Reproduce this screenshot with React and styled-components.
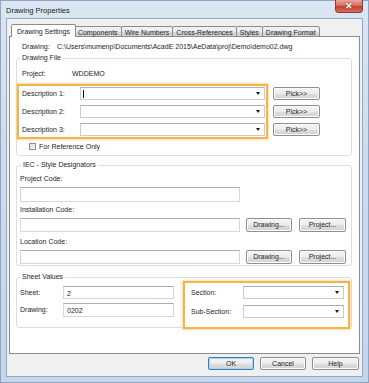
import styled, { createGlobalStyle } from "styled-components";

const GlobalStyle = createGlobalStyle`
  html, body {
    margin: 0;
    padding: 0;
  }
  body {
    font-family: "Liberation Sans", Arial, sans-serif;
    font-size: 7px;
    color: #1e1e1e;
  }
  * {
    box-sizing: border-box;
  }
`;

const Window = styled.div`
  width: 369px;
  height: 383px;
  display: flex;
  flex-direction: column;
  padding: 0 5px 5px 5px;
  border: 1px solid #8ea4c0;
  background: linear-gradient(180deg, #dbe6f3 0%, #cddced 40%, #c4d6ec 100%);
`;

const TitleBar = styled.div`
  height: 17px;
  display: flex;
  justify-content: space-between;
  align-items: flex-start;
`;

const TitleText = styled.div`
  padding-top: 5px;
  font-size: 7.5px;
  line-height: 9px;
  color: #1c1c1c;
`;

const CloseButton = styled.div`
  width: 28px;
  height: 13px;
  margin-top: -1px;
  border: 1px solid #8b3a33;
  border-top: none;
  border-radius: 0 0 4px 4px;
  background: linear-gradient(180deg, #e8a79d 0%, #d7705f 45%, #c2412e 55%, #d9705a 100%);
  color: #fff;
  font-size: 9px;
  font-weight: bold;
  line-height: 12px;
  text-align: center;
  text-shadow: 0 0 2px #6a1d14;
`;

const Client = styled.div`
  flex: 1;
  display: flex;
  flex-direction: column;
  padding: 5px 2px 0 2px;
  background: #f0f0f0;
  border: 1px solid #93a7c0;
`;

const TabsRow = styled.div`
  display: flex;
  align-items: flex-end;
  padding-left: 2px;
  margin-bottom: -1px;
  position: relative;
  z-index: 1;
`;

const Tab = styled.div`
  height: ${(p) => (p.$active ? "13px" : "11px")};
  padding: ${(p) => (p.$active ? "2px 5px 0" : "1px 3px 0")};
  margin: ${(p) => (p.$active ? "0 -1px 0 0" : "0 0 0 -1px")};
  line-height: 9px;
  border: 1px solid #898c95;
  border-bottom: ${(p) => (p.$active ? "none" : "1px solid #898c95")};
  border-radius: 2px 2px 0 0;
  background: ${(p) =>
    p.$active ? "#ffffff" : "linear-gradient(180deg, #f2f2f2 0%, #ebebeb 50%, #dddddd 51%, #cfcfcf 100%)"};
  white-space: nowrap;
  position: relative;
  z-index: ${(p) => (p.$active ? 2 : 1)};
`;

const Panel = styled.div`
  flex: 1;
  display: flex;
  flex-direction: column;
  background: #fff;
  border: 1px solid #898c95;
`;

const DrawingRow = styled.div`
  display: flex;
  height: 10px;
  line-height: 10px;
  margin-top: 5px;
  padding-left: 12px;
`;

const Label = styled.div`
  width: ${(p) => p.$w || "auto"};
  flex: none;
  line-height: 10px;
  white-space: nowrap;
`;

const Group = styled.fieldset`
  margin: ${(p) => p.$mt || "0"} 7px 0 6px;
  padding: 0 ${(p) => p.$px || "0"} ${(p) => p.$pb || "0"};
  border: 1px solid #dadfe3;
  border-radius: 3px;
  min-width: 0;
`;

const Legend = styled.legend`
  margin-left: ${(p) => p.$ml || "3px"};
  padding: 0 2px;
  line-height: 10px;
  font-size: 7px;
`;

const Row = styled.div`
  display: flex;
  align-items: center;
  height: ${(p) => p.$h || "10px"};
  margin-top: ${(p) => p.$mt || "0"};
  padding-left: ${(p) => p.$pl || "0"};
`;

const HighlightRow = styled.div`
  display: flex;
  align-items: flex-start;
  margin-top: ${(p) => p.$mt || "0"};
`;

const Highlight = styled.div`
  display: flex;
  flex-direction: column;
  gap: ${(p) => p.$gap};
  padding: ${(p) => p.$pad};
  margin: ${(p) => p.$margin || "0"};
  border: 2px solid #f3b54a;
  box-shadow: 0 0 2px 1px rgba(246, 196, 110, 0.6);
  position: relative;
`;

const Stack = styled.div`
  display: flex;
  flex-direction: column;
  gap: ${(p) => p.$gap};
  padding-top: ${(p) => p.$pt || "0"};
  margin-left: ${(p) => p.$ml || "0"};
`;

const Combo = styled.div`
  position: relative;
  width: ${(p) => p.$w};
  height: 13px;
  background: #fff;
  border: 1px solid #c9ccd3;
  border-top-color: #abadb3;

  &::after {
    content: "";
    position: absolute;
    right: 4px;
    top: 4px;
    border-left: 2.5px solid transparent;
    border-right: 2.5px solid transparent;
    border-top: 3px solid #1a1a1a;
  }
`;

const Caret = styled.span`
  position: absolute;
  left: 2px;
  top: 2px;
  width: 1px;
  height: 8px;
  background: #111;
`;

const TextBox = styled.div`
  width: ${(p) => p.$w};
  height: ${(p) => p.$h || "14px"};
  padding-left: 3px;
  line-height: ${(p) => p.$h || "14px"};
  background: #fff;
  border: 1px solid #d3d6dc;
  border-top-color: #abadb3;
  flex: none;
`;

const Button = styled.div`
  width: ${(p) => p.$w || "46px"};
  height: ${(p) => p.$h || "13px"};
  line-height: ${(p) => (p.$h ? `calc(${p.$h} - 2px)` : "11px")};
  margin-left: ${(p) => p.$ml || "0"};
  text-align: center;
  flex: none;
  border: 1px solid ${(p) => (p.$default ? "#3c7fb1" : "#8e8f8f")};
  border-radius: 2px;
  background: linear-gradient(180deg, #f4f4f4 0%, #ececec 50%, #dedede 51%, #d3d3d3 100%);
  box-shadow: ${(p) => (p.$default ? "inset 0 0 0 1px #a7d6f5" : "inset 0 0 0 1px #fbfbfb")};
`;

const CheckRow = styled.div`
  display: flex;
  align-items: center;
  gap: 3px;
  height: 10px;
  margin-top: 2px;
  padding-left: 12px;
`;

const CheckBox = styled.div`
  width: 7px;
  height: 7px;
  border: 1px solid #8f8f8f;
  background: linear-gradient(135deg, #dcdcdc 0%, #f6f6f6 100%);
`;

const FieldLabel = styled.div`
  line-height: 10px;
  margin-top: ${(p) => p.$mt || "0"};
`;

const FieldRow = styled.div`
  display: flex;
  margin-top: ${(p) => p.$mt || "0"};
`;

const SheetRow = styled.div`
  display: flex;
  align-items: flex-start;
`;

const BottomBar = styled.div`
  display: flex;
  justify-content: flex-end;
  height: 22px;
  padding: 3px 1px 0 0;
  gap: 6px;
`;

const descriptions = ["Description 1:", "Description 2:", "Description 3:"];
const tabs = ["Drawing Settings", "Components", "Wire Numbers", "Cross-References", "Styles", "Drawing Format"];

const App = () => {
  return (
    <>
      <GlobalStyle />
      <Window>
        <TitleBar>
          <TitleText>Drawing Properties</TitleText>
          <CloseButton>✕</CloseButton>
        </TitleBar>
        <Client>
          <TabsRow>
            {tabs.map((t, i) => (
              <Tab key={t} $active={i === 0}>
                {t}
              </Tab>
            ))}
          </TabsRow>
          <Panel>
            <DrawingRow>
              <Label $w="35px">Drawing:</Label>
              <Label>C:\Users\mumenp\Documents\AcadE 2015\AeData\proj\Demo\demo02.dwg</Label>
            </DrawingRow>

            <Group $mt="1px" $pb="4px">
              <Legend $ml="3px">Drawing File</Legend>
              <Row $mt="6px" $pl="5px">
                <Label $w="50px">Project:</Label>
                <Label>WDDEMO</Label>
              </Row>
              <HighlightRow $mt="5px">
                <Highlight $gap="5px" $pad="1px 1px 1px 3px">
                  {descriptions.map((d, i) => (
                    <Row key={d} $h="13px">
                      <Label $w="58px">{d}</Label>
                      <Combo $w="185px">{i === 0 && <Caret />}</Combo>
                    </Row>
                  ))}
                </Highlight>
                <Stack $gap="5px" $pt="3px" $ml="5px">
                  {descriptions.map((d) => (
                    <Button key={d} $w="47px">
                      Pick&gt;&gt;
                    </Button>
                  ))}
                </Stack>
              </HighlightRow>
              <CheckRow>
                <CheckBox />
                <span>For Reference Only</span>
              </CheckRow>
            </Group>

            <Group $mt="4px" $px="3px" $pb="1px">
              <Legend $ml="1px">IEC - Style Designators</Legend>
              <FieldLabel $mt="4px">Project Code:</FieldLabel>
              <FieldRow $mt="3px">
                <TextBox $w="220px" $h="15px" />
              </FieldRow>
              <FieldLabel $mt="3px">Installation Code:</FieldLabel>
              <FieldRow $mt="3px">
                <TextBox $w="220px" />
                <Button $h="14px" $ml="6px">
                  Drawing...
                </Button>
                <Button $h="14px" $w="47px" $ml="7px">
                  Project...
                </Button>
              </FieldRow>
              <FieldLabel $mt="5px">Location Code:</FieldLabel>
              <FieldRow $mt="3px">
                <TextBox $w="220px" />
                <Button $h="14px" $ml="6px">
                  Drawing...
                </Button>
                <Button $h="14px" $w="47px" $ml="7px">
                  Project...
                </Button>
              </FieldRow>
            </Group>

            <Group $mt="6px" $px="0px" $pb="1px">
              <Legend $ml="3px">Sheet Values</Legend>
              <SheetRow>
                <Stack $gap="4px" $pt="4px" $ml="3px">
                  <Row $h="13px">
                    <Label $w="43px">Sheet:</Label>
                    <TextBox $w="111px" $h="13px">
                      2
                    </TextBox>
                  </Row>
                  <Row $h="14px">
                    <Label $w="43px">Drawing:</Label>
                    <TextBox $w="111px">0202</TextBox>
                  </Row>
                </Stack>
                <Highlight $gap="6px" $pad="3px 4px 9px 6px" $margin="-1px 1px -3px auto">
                  <Row $h="13px">
                    <Label $w="52px">Section:</Label>
                    <Combo $w="101px" />
                  </Row>
                  <Row $h="13px">
                    <Label $w="52px">Sub-Section:</Label>
                    <Combo $w="101px" />
                  </Row>
                </Highlight>
              </SheetRow>
            </Group>
          </Panel>
          <BottomBar>
            <Button $default>OK</Button>
            <Button>Cancel</Button>
            <Button $w="47px">Help</Button>
          </BottomBar>
        </Client>
      </Window>
    </>
  );
};

export default App;
